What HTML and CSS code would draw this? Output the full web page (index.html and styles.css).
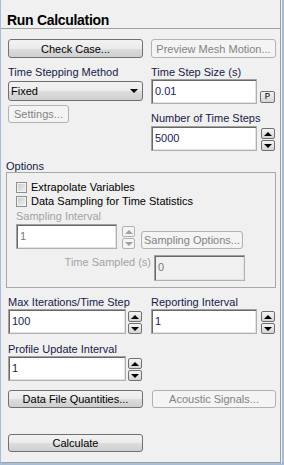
FILE: index.html
```html
<!DOCTYPE html>
<html lang="en">
<head>
    <meta charset="UTF-8">
    <meta name="viewport" content="width=device-width, initial-scale=1.0">
    <title>Run Calculation</title>
    <link rel="stylesheet" href="styles.css">
</head>
<body>
    <div class="window">
        <div class="panel">
            <h1 class="title">Run Calculation</h1>

            <div class="pair top-buttons">
                <button class="btn">Check Case...</button>
                <button class="btn" disabled>Preview Mesh Motion...</button>
            </div>

            <div class="pair stepping">
                <div class="col">
                    <div class="lbl">Time Stepping Method</div>
                    <div class="select">Fixed<span class="caret"></span></div>
                    <button class="btn settings" disabled>Settings...</button>
                </div>
                <div class="col">
                    <div class="lbl">Time Step Size (s)</div>
                    <div class="field">
                        <div class="input w106">0.01</div>
                        <button class="pbtn">P</button>
                    </div>
                    <div class="lbl lbl-next">Number of Time Steps</div>
                    <div class="field field-next">
                        <div class="input w106">5000</div>
                        <div class="spin gap4">
                            <span class="spin-btn up"></span>
                            <span class="spin-btn down"></span>
                        </div>
                    </div>
                </div>
            </div>

            <div class="group-title">Options</div>
            <div class="group">
                <div class="check"><span class="box"></span>Extrapolate Variables</div>
                <div class="check"><span class="box"></span>Data Sampling for Time Statistics</div>
                <div class="lbl off sampling-lbl">Sampling Interval</div>
                <div class="field sampling">
                    <div class="input w101 dim">1</div>
                    <div class="spin off">
                        <span class="spin-btn up"></span>
                        <span class="spin-btn down"></span>
                    </div>
                    <button class="btn sampling-btn" disabled>Sampling Options...</button>
                </div>
                <div class="field sampled">
                    <div class="lbl off sampled-lbl">Time Sampled (s)</div>
                    <div class="input w91 dim grey">0</div>
                </div>
            </div>

            <div class="pair iter">
                <div class="col">
                    <div class="lbl">Max Iterations/Time Step</div>
                    <div class="field">
                        <div class="input w118">100</div>
                        <div class="spin gap2">
                            <span class="spin-btn up"></span>
                            <span class="spin-btn down"></span>
                        </div>
                    </div>
                </div>
                <div class="col">
                    <div class="lbl">Reporting Interval</div>
                    <div class="field">
                        <div class="input w106">1</div>
                        <div class="spin gap4">
                            <span class="spin-btn up"></span>
                            <span class="spin-btn down"></span>
                        </div>
                    </div>
                </div>
            </div>

            <div class="pair profile">
                <div class="col">
                    <div class="lbl">Profile Update Interval</div>
                    <div class="field">
                        <div class="input w118">1</div>
                        <div class="spin gap2">
                            <span class="spin-btn up"></span>
                            <span class="spin-btn down"></span>
                        </div>
                    </div>
                </div>
            </div>

            <div class="pair bottom-buttons">
                <button class="btn short">Data File Quantities...</button>
                <button class="btn short" disabled>Acoustic Signals...</button>
            </div>

            <button class="btn short calculate">Calculate</button>
        </div>
    </div>
</body>
</html>
```

FILE: styles.css
```css
body {
    margin: 0;
    font-family: "Liberation Sans", Arial, sans-serif;
    font-size: 11px;
    color: #000;
    background: #f0f0f0;
}

.window {
    width: 284px;
    height: 465px;
    box-sizing: border-box;
    border-left: 1px solid #a5bdd9;
    border-right: 2px solid #a5bdd9;
    border-bottom: 2px solid #a5bdd9;
    background: #f0f0f0;
}

.panel {
    height: 100%;
    box-sizing: border-box;
    margin-right: 1px;
    padding-left: 7px;
    border-right: 1px solid #a0a0a0;
    border-bottom: 1px solid #a0a0a0;
}

.title {
    margin: 0 0 0 -7px;
    padding: 12px 0 0 6px;
    height: 16px;
    line-height: 16px;
    font-size: 14px;
    font-weight: bold;
    letter-spacing: -0.3px;
    color: #000;
    border-bottom: 1px solid #a0a0a0;
}

.pair {
    display: grid;
    grid-template-columns: 135px 125px;
    column-gap: 8px;
}

.col {
    display: flex;
    flex-direction: column;
    align-items: flex-start;
}

/* buttons */

.btn {
    height: 19px;
    padding: 0;
    box-sizing: border-box;
    border: 1px solid #707070;
    border-radius: 3px;
    background: linear-gradient(#f2f2f2 0%, #ebebeb 50%, #dddddd 51%, #cfcfcf 100%);
    font: inherit;
    color: #000;
    white-space: nowrap;
}

.btn:disabled {
    border-color: #adb2b5;
    background: #f4f4f4;
    color: #838383;
}

.btn.short {
    height: 18px;
}

.top-buttons {
    margin-top: 10px;
}

.settings {
    margin-top: 4px;
    width: 61px;
    height: 18px;
}

.calculate {
    display: block;
    width: 135px;
    margin-top: 26px;
}

/* labels */

.lbl {
    line-height: 13px;
    color: #161a4a;
    white-space: nowrap;
}

.lbl.off {
    color: #a3a3a3;
}

.lbl-next {
    margin-top: 8px;
}

/* select */

.select {
    margin-top: 2px;
    width: 135px;
    height: 20px;
    box-sizing: border-box;
    display: flex;
    align-items: center;
    justify-content: space-between;
    padding: 0 4px 0 2px;
    border: 1px solid #707070;
    border-radius: 3px;
    background: linear-gradient(#f2f2f2 0%, #ebebeb 50%, #dddddd 51%, #cfcfcf 100%);
    color: #000;
}

.caret {
    width: 0;
    height: 0;
    border-left: 4px solid transparent;
    border-right: 4px solid transparent;
    border-top: 4px solid #000;
}

/* text fields */

.stepping {
    margin-top: 8px;
}

.field {
    display: flex;
    align-items: flex-end;
}

.field-next {
    margin-top: 1px;
}

.input {
    height: 25px;
    box-sizing: border-box;
    padding: 2px 0 0 3px;
    line-height: 18px;
    border: 1px solid #b0b0b0;
    border-top-color: #a0a0a0;
    border-left-color: #a0a0a0;
    box-shadow: inset 1px 1px 0 #696969, inset -1px -1px 0 #e3e3e3;
    background: #fff;
    color: #1b2058;
}

.input.dim {
    color: #7a7a7a;
}

.input.grey {
    background: #f0f0f0;
    height: 26px;
}

.w91 { width: 91px; }
.w101 { width: 101px; }
.w106 { width: 106px; }
.w118 { width: 118px; }

.pbtn {
    width: 15px;
    height: 12px;
    margin: 0 0 1px 3px;
    padding: 0;
    box-sizing: border-box;
    border: 1px solid #707070;
    border-radius: 2px;
    background: linear-gradient(#f2f2f2, #d6d6d6);
    font: 9px "Liberation Mono", monospace;
    line-height: 10px;
    color: #000;
}

/* spinners */

.spin {
    display: flex;
    flex-direction: column;
    gap: 1px;
}

.gap2 { margin-left: 2px; }
.gap4 { margin-left: 4px; }

.spin-btn {
    width: 14px;
    height: 11px;
    box-sizing: border-box;
    display: flex;
    align-items: center;
    justify-content: center;
    border: 1px solid #707070;
    border-radius: 2px;
    background: linear-gradient(#f4f4f4, #d4d4d4);
}

.spin-btn::after {
    content: "";
    width: 0;
    height: 0;
    border-left: 4px solid transparent;
    border-right: 4px solid transparent;
}

.spin-btn.up::after {
    border-bottom: 4px solid #000;
}

.spin-btn.down::after {
    border-top: 4px solid #000;
}

.spin.off .spin-btn {
    border-color: #adb2b5;
    background: #f4f4f4;
}

.spin.off .spin-btn.up::after {
    border-bottom-color: #a0a0a0;
}

.spin.off .spin-btn.down::after {
    border-top-color: #a0a0a0;
}

/* options group */

.group-title {
    margin: 9px 0 0 -2px;
    line-height: 12px;
    color: #161a4a;
}

.group {
    width: 270px;
    margin-left: -2px;
    box-sizing: border-box;
    padding: 7px 0 6px 9px;
    border: 1px solid #a8a8a8;
}

.check {
    display: flex;
    align-items: center;
    height: 14px;
    line-height: 14px;
    white-space: nowrap;
}

.box {
    width: 11px;
    height: 11px;
    box-sizing: border-box;
    margin-right: 4px;
    border: 1px solid #8e8f8f;
    background: linear-gradient(135deg, #c9c9c9, #f3f3f3);
    box-shadow: inset 0 0 0 1px #f4f4f4;
}

.sampling-lbl {
    margin-top: 2px;
}

.sampling {
    margin-top: 1px;
}

.sampling .spin {
    margin-left: 5px;
}

.sampling .spin-btn {
    width: 13px;
}

.sampling-btn {
    width: 102px;
    height: 18px;
    margin-left: 6px;
}

.sampled {
    margin-top: 6px;
    align-items: flex-start;
}

.sampled-lbl {
    width: 135px;
    margin: 1px 3px 0 0;
    text-align: right;
}

/* lower rows */

.iter {
    margin-top: 8px;
}

.profile {
    margin-top: 9px;
}

.bottom-buttons {
    margin-top: 9px;
}

.bottom-buttons .btn:last-child {
    margin-left: 1px;
    width: 124px;
}
```
